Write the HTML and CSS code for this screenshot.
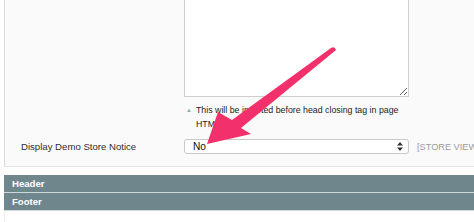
FILE: index.html
```html
<!DOCTYPE html>
<html lang="en">
<head>
    <meta charset="UTF-8" />
    <title>Design - HTML Head</title>
    <link rel="stylesheet" href="styles.css">
</head>
<body>
<div class="page">
    <div class="fieldset">
        <div class="row">
            <div class="label"></div>
            <div class="value">
                <textarea class="textarea"></textarea>
                <p class="note"><span class="note-mark">&#9650;</span>This will be inserted before head closing tag in page HTML.</p>
            </div>
        </div>
        <div class="row row-select">
            <div class="label">Display Demo Store Notice</div>
            <div class="value">
                <div class="select">
                    <span>No</span>
                    <svg class="select-arrows" width="6" height="9" viewBox="0 0 6 9">
                        <path d="M3 0 L6 3.5 L0 3.5 Z M3 9 L6 5.5 L0 5.5 Z" fill="#333"/>
                    </svg>
                </div>
            </div>
            <div class="scope">[STORE VIEW]</div>
        </div>
    </div>

    <div class="sections">
        <div class="section-head">Header</div>
        <div class="section-head">Footer</div>
    </div>
    <div class="after"></div>

    <!-- annotation arrow drawn over the form -->
    <svg class="arrow" width="474" height="222" viewBox="0 0 474 222">
        <path d="M331 48 Q335 46 336 50 L241 128 L251 134 L207 144 L218 112 L232 120 Z" fill="#f2306c"/>
    </svg>
</div>
</body>
</html>
```

FILE: styles.css
```css
:root {
    --panel-bg: #fafafa;
    --panel-border: #dadada;
    --bar: #6f868d;
    --text: #2f2f2f;
    --muted: #9a9a9a;
}
html, body {
    margin: 0;
    padding: 0;
    background: #fff;
    overflow: hidden;
}
body {
    font-family: "Liberation Sans", Arial, Helvetica, sans-serif;
    color: var(--text);
    width: 474px;
    height: 222px;
}
.page {
    position: relative;
    padding-left: 4px;
    height: 222px;
}
.fieldset {
    background: var(--panel-bg);
    border-left: 1px solid var(--panel-border);
    border-bottom: 1px solid #e2e2e2;
    height: 167px;
    box-sizing: border-box;
}
.row {
    display: flex;
    align-items: flex-start;
}
.label {
    width: 179px;
    padding-left: 16px;
    box-sizing: border-box;
    font-size: 9.6px;
    flex-shrink: 0;
}
.value {
    width: 225px;
    flex-shrink: 0;
}
.textarea {
    display: block;
    width: 225px;
    height: 101px;
    margin: -4px 0 0;
    border: 1px solid #cfcfcf;
    background: #fff;
    box-sizing: border-box;
    resize: vertical;
}
.note {
    margin: 6px 0 0;
    padding-left: 12px;
    position: relative;
    font-size: 8.8px;
    line-height: 14px;
    color: #1a1a1a;
}
.note-mark {
    position: absolute;
    left: 2px;
    top: 0;
    font-size: 6px;
    color: #9aa;
}
.row-select {
    margin-top: 8px;
    align-items: center;
}
.select {
    height: 15px;
    border: 1px solid #c9c9c9;
    border-radius: 3px;
    background: #fff;
    box-sizing: border-box;
    display: flex;
    align-items: center;
    justify-content: space-between;
    padding: 0 5px 0 8px;
    font-size: 10.2px;
    color: #111;
}
.select-arrows {
    display: block;
}
.scope {
    margin-left: 8px;
    font-size: 9.2px;
    color: var(--muted);
    white-space: nowrap;
}
.sections {
    margin-top: 8px;
}
.section-head {
    background: var(--bar);
    color: #fff;
    font-weight: bold;
    font-size: 9.6px;
    height: 17px;
    line-height: 17px;
    padding-left: 8px;
    border-bottom: 1px solid #cfd9dc;
}
.after {
    height: 20px;
    border-left: 1px solid #ececec;
}
.arrow {
    position: absolute;
    left: 0;
    top: 0;
    pointer-events: none;
}
```
